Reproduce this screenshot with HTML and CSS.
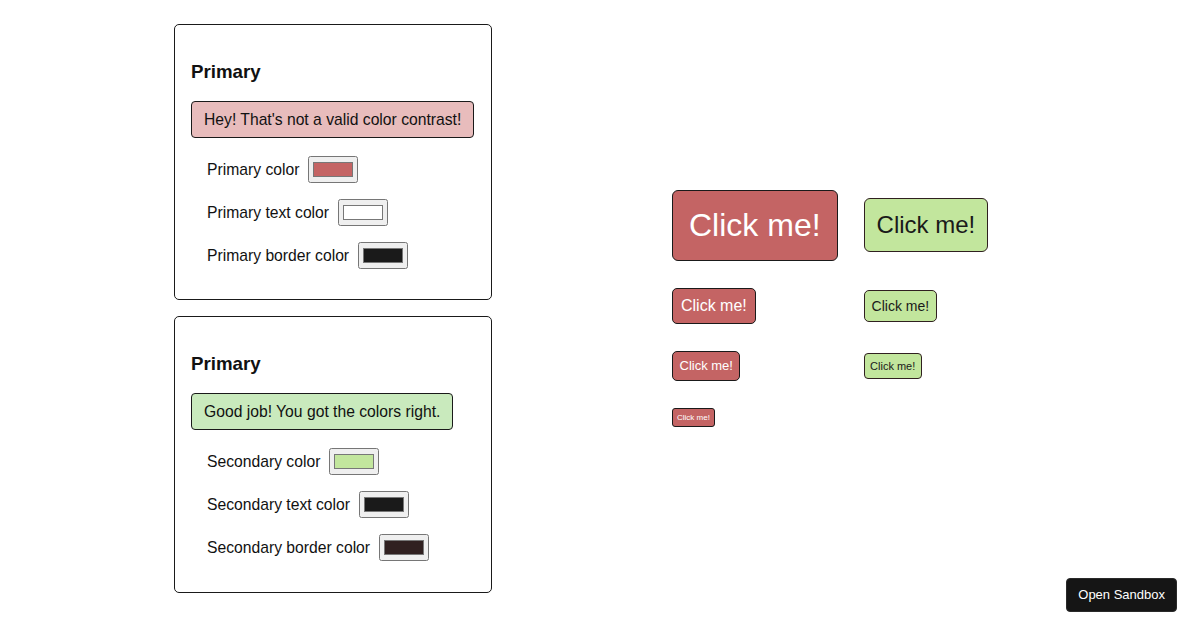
FILE: index.html
```html
<!DOCTYPE html>
<html lang="en">
<head>
<meta charset="utf-8">
<title>Color contrast</title>
<link rel="stylesheet" href="styles.css">
</head>
<body>
<main class="page">
  <section class="panels">
    <div class="card">
      <h3 class="card-title">Primary</h3>
      <div class="alert alert-bad">Hey! That's not a valid color contrast!</div>
      <label class="row">Primary color <input type="color" value="#c46464"></label>
      <label class="row">Primary text color <input type="color" value="#ffffff"></label>
      <label class="row">Primary border color <input type="color" value="#1a1a1a"></label>
    </div>
    <div class="card">
      <h3 class="card-title">Primary</h3>
      <div class="alert alert-good">Good job! You got the colors right.</div>
      <label class="row">Secondary color <input type="color" value="#c2e69d"></label>
      <label class="row">Secondary text color <input type="color" value="#1a1a1a"></label>
      <label class="row">Secondary border color <input type="color" value="#302020"></label>
    </div>
  </section>
  <section class="buttons">
    <button class="btn btn-primary s32">Click me!</button>
    <button class="btn btn-secondary s24">Click me!</button>
    <button class="btn btn-primary s16">Click me!</button>
    <button class="btn btn-secondary s14">Click me!</button>
    <button class="btn btn-primary s13">Click me!</button>
    <button class="btn btn-secondary s11">Click me!</button>
    <button class="btn btn-primary s8">Click me!</button>
  </section>
</main>
<a class="sandbox" href="#">Open Sandbox</a>
</body>
</html>
```
FILE: styles.css
```css
html, body {
  margin: 0;
  padding: 0;
  background: #ffffff;
}

body {
  font-family: "Liberation Sans", Arial, sans-serif;
  color: #111111;
  width: 1200px;
  height: 630px;
  overflow: hidden;
}

.page {
  display: flex;
  align-items: center;
  padding: 24px 0 0 174px;
  gap: 180px;
}

.panels {
  display: flex;
  flex-direction: column;
  gap: 16px;
  width: 318px;
}

.card {
  border: 1px solid #1a1a1a;
  border-radius: 5px;
  padding: 18px 16px 30px 16px;
  display: flex;
  flex-direction: column;
  align-items: flex-start;
}

.card + .card {
  padding-bottom: 31px;
}

.card-title {
  font-size: 18.72px;
  font-weight: bold;
  margin: 18px 0 18px 0;
  line-height: 22px;
}

.alert {
  border: 1px solid #1a1a1a;
  border-radius: 4px;
  padding: 8px 12px;
  font-size: 15.7px;
  line-height: 19px;
  white-space: nowrap;
  margin-bottom: 2px;
}

.alert-bad {
  background: #e8bcbc;
}

.alert-good {
  background: #c9eabd;
}

.row {
  display: flex;
  align-items: center;
  gap: 9px;
  font-size: 15.7px;
  margin: 16px 0 0 16px;
  height: 27px;
  white-space: nowrap;
}

.row input[type="color"] {
  width: 50px;
  height: 27px;
  margin: 0;
}

.buttons {
  display: grid;
  grid-template-columns: auto auto;
  column-gap: 26px;
  row-gap: 27px;
  align-items: center;
  justify-items: start;
}

.btn {
  font-family: "Liberation Sans", Arial, sans-serif;
  padding: 0.5em;
  line-height: 1.15;
  margin: 0;
  white-space: nowrap;
  cursor: pointer;
}

.btn-primary {
  background: #c46464;
  color: #ffffff;
  border: 1px solid #1a1a1a;
}

.btn-secondary {
  background: #c2e69d;
  color: #1a1a1a;
  border: 1px solid #302020;
}

.s32 { font-size: 32px; border-radius: 6px; }
.s24 { font-size: 24px; border-radius: 6px; }
.s16 { font-size: 16px; border-radius: 5px; }
.s14 { font-size: 14px; border-radius: 5px; }
.s13 { font-size: 13px; border-radius: 5px; }
.s11 { font-size: 11px; border-radius: 4px; }
.s8 { font-size: 8px; border-radius: 3px; }

.sandbox {
  position: fixed;
  right: 23px;
  bottom: 18px;
  background: #151515;
  color: #ffffff;
  font-family: "Liberation Sans", Arial, sans-serif;
  font-size: 13px;
  line-height: 15px;
  padding: 8px 11px 9px 11px;
  border-radius: 4px;
  border: 1px solid #2a2a2a;
  text-decoration: none;
}
```
